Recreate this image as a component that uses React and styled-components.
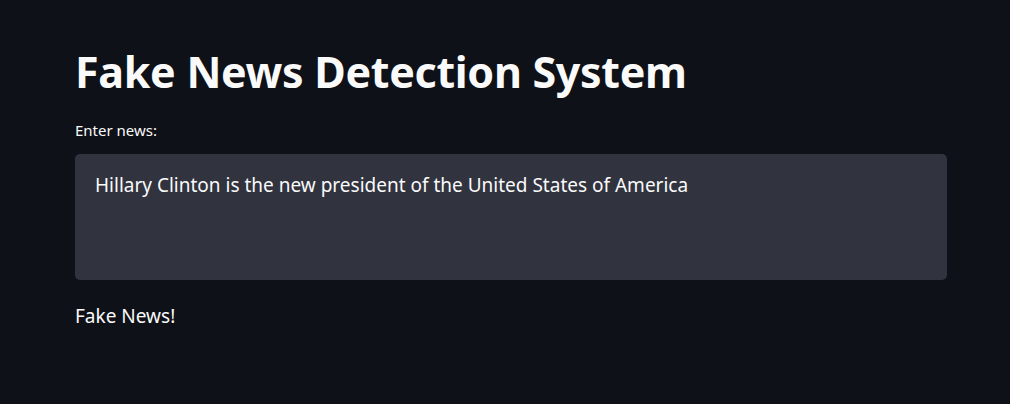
import React from "react"
import styled, { createGlobalStyle } from "styled-components"

const GlobalStyle = createGlobalStyle`
    html, body {
        margin: 0;
        padding: 0;
        background: #0e1117;
    }
    body {
        font-family: "Noto Sans", "Liberation Sans", sans-serif;
        color: #fafafa;
    }
`

const Page = styled.div`
    width: 1010px;
    height: 404px;
    box-sizing: border-box;
    padding: 42px 63px 0 75px;
    display: flex;
    flex-direction: column;
`

const Title = styled.h1`
    margin: 0;
    font-family: "Noto Sans", sans-serif;
    font-size: 43px;
    font-weight: 700;
    line-height: 60px;
    letter-spacing: -0.3px;
    color: #fafafa;
`

const Label = styled.label`
    margin-top: 18px;
    font-size: 15px;
    line-height: 21px;
    color: #fafafa;
`

const NewsInput = styled.textarea`
    margin-top: 13px;
    width: 872px;
    height: 126px;
    box-sizing: border-box;
    padding: 18px 20px;
    border: none;
    border-radius: 5px;
    background: #31333f;
    color: #fafafa;
    font-family: "Noto Sans", "Liberation Sans", sans-serif;
    font-size: 19px;
    line-height: 26px;
    resize: none;
    outline: none;
`

const Result = styled.p`
    margin: 23px 0 0;
    font-size: 19px;
    line-height: 26px;
    color: #fafafa;
`

export default function App() {
    return (
        <>
            <GlobalStyle />
            <Page>
                <Title>Fake News Detection System</Title>
                <Label>Enter news:</Label>
                <NewsInput
                    defaultValue="Hillary Clinton is the new president of the United States of America"
                />
                <Result>Fake News!</Result>
            </Page>
        </>
    )
}
